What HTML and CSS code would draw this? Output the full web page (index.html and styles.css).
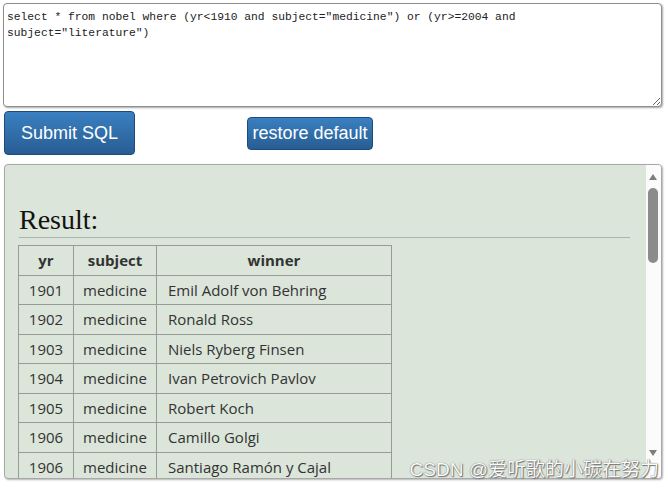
FILE: index.html
```html
<!DOCTYPE html>
<html>
<head>
<meta charset="utf-8">
<link rel="stylesheet" href="styles.css">
</head>
<body>
<textarea class="sql" spellcheck="false">select * from nobel where (yr<1910 and subject="medicine") or (yr>=2004 and subject="literature")</textarea>
<div class="actions">
  <button class="btn btn-submit">Submit SQL</button>
  <button class="btn btn-restore">restore default</button>
</div>
<div class="result">
  <div class="result-body">
    <h2 class="result-title">Result:</h2>
    <table class="grid">
      <colgroup><col class="c-yr"><col class="c-subj"><col class="c-win"></colgroup>
      <thead><tr><th>yr</th><th>subject</th><th>winner</th></tr></thead>
      <tbody>
        <tr><td>1901</td><td>medicine</td><td class="w">Emil Adolf von Behring</td></tr>
        <tr><td>1902</td><td>medicine</td><td class="w">Ronald Ross</td></tr>
        <tr><td>1903</td><td>medicine</td><td class="w">Niels Ryberg Finsen</td></tr>
        <tr><td>1904</td><td>medicine</td><td class="w">Ivan Petrovich Pavlov</td></tr>
        <tr><td>1905</td><td>medicine</td><td class="w">Robert Koch</td></tr>
        <tr><td>1906</td><td>medicine</td><td class="w">Camillo Golgi</td></tr>
        <tr><td>1906</td><td>medicine</td><td class="w">Santiago Ramón y Cajal</td></tr>
      </tbody>
    </table>
  </div>
  <div class="vscroll">
    <span class="arrow arrow-up"></span>
    <span class="thumb"></span>
    <span class="arrow arrow-down"></span>
  </div>
</div>
<div class="watermark">CSDN @爱听歌的小碳在努力</div>
</body>
</html>
```
FILE: styles.css
```css
html, body { margin: 0; padding: 0; background: #fff; }
body { padding: 3px; position: relative; height: 488px; box-sizing: border-box; overflow: hidden; }

.sql {
  display: block;
  box-sizing: border-box;
  width: 659px;
  height: 104px;
  margin: 0 0 4px 0;
  padding: 5px 3px 3px 3px;
  border: 1px solid #8f8f8f;
  border-radius: 4px;
  box-shadow: 1px 1px 2px rgba(0,0,0,0.35);
  font-family: "Liberation Mono", monospace;
  font-size: 11.3px;
  line-height: 16px;
  color: #222;
  background: #fff;
  outline: none;
  resize: vertical;
}

.actions { display: flex; align-items: center; height: 44px; margin-left: 1px; }
.btn {
  font-family: "Liberation Sans", Arial, sans-serif;
  font-size: 18px;
  color: #fff;
  border: 1px solid #1e4c7a;
  border-radius: 4px;
  background: linear-gradient(#3a80c1, #285d93);
  cursor: pointer;
}
.btn-submit { width: 131px; height: 44px; padding: 0; }
.btn-restore { width: 126px; height: 33px; padding: 0; margin-left: 112px; }

.result {
  position: relative;
  box-sizing: border-box;
  width: 658px;
  height: 315px;
  margin: 9px 0 0 1px;
  border: 1px solid #a8a8a8;
  border-radius: 4px;
  box-shadow: 1px 1px 2px rgba(0,0,0,0.3);
  background: #dbe5da;
  overflow: hidden;
}
.result-body { padding: 0 31px 0 14px; }
.result-title {
  margin: 38px 0 7px 0;
  padding: 0 0 1px 0;
  font-family: "Liberation Serif", Georgia, serif;
  font-weight: normal;
  font-size: 28px;
  line-height: 33px;
  color: #111;
  border-bottom: 1px solid #aab2b2;
}
.grid {
  border-collapse: collapse;
  width: 374px;
  margin-left: -1px;
  font-family: "Open Sans", "Noto Sans", sans-serif;
  font-size: 15px;
  color: #333;
}
.c-yr { width: 55px; }
.c-subj { width: 83px; }
.grid th, .grid td {
  border: 1px solid #979a97;
  padding: 4px 8px;
  line-height: 20.5px;
  text-align: center;
}
.grid th { font-weight: bold; }
.grid td.w { text-align: left; padding-left: 11px; }

.vscroll {
  position: absolute;
  top: 0;
  right: 0;
  bottom: 0;
  width: 15px;
  background: #fbfbfb;
}
.arrow {
  position: absolute;
  left: 3px;
  width: 0;
  height: 0;
  border-left: 4.5px solid transparent;
  border-right: 4.5px solid transparent;
}
.arrow-up { top: 9px; border-bottom: 6px solid #7d7d7d; }
.arrow-down { bottom: 22px; border-top: 6px solid #7d7d7d; }
.thumb {
  position: absolute;
  left: 2px;
  top: 23px;
  width: 10px;
  height: 75px;
  border-radius: 5px;
  background: #8c8c8c;
}

.watermark {
  position: absolute;
  right: 9px;
  bottom: 8px;
  font-family: "Liberation Sans", "Noto Sans CJK SC", sans-serif;
  font-size: 19px;
  line-height: 21px;
  color: #fafafa;
  text-shadow: 0 0 1px #555, 1px 1px 1px #777;
}
```
